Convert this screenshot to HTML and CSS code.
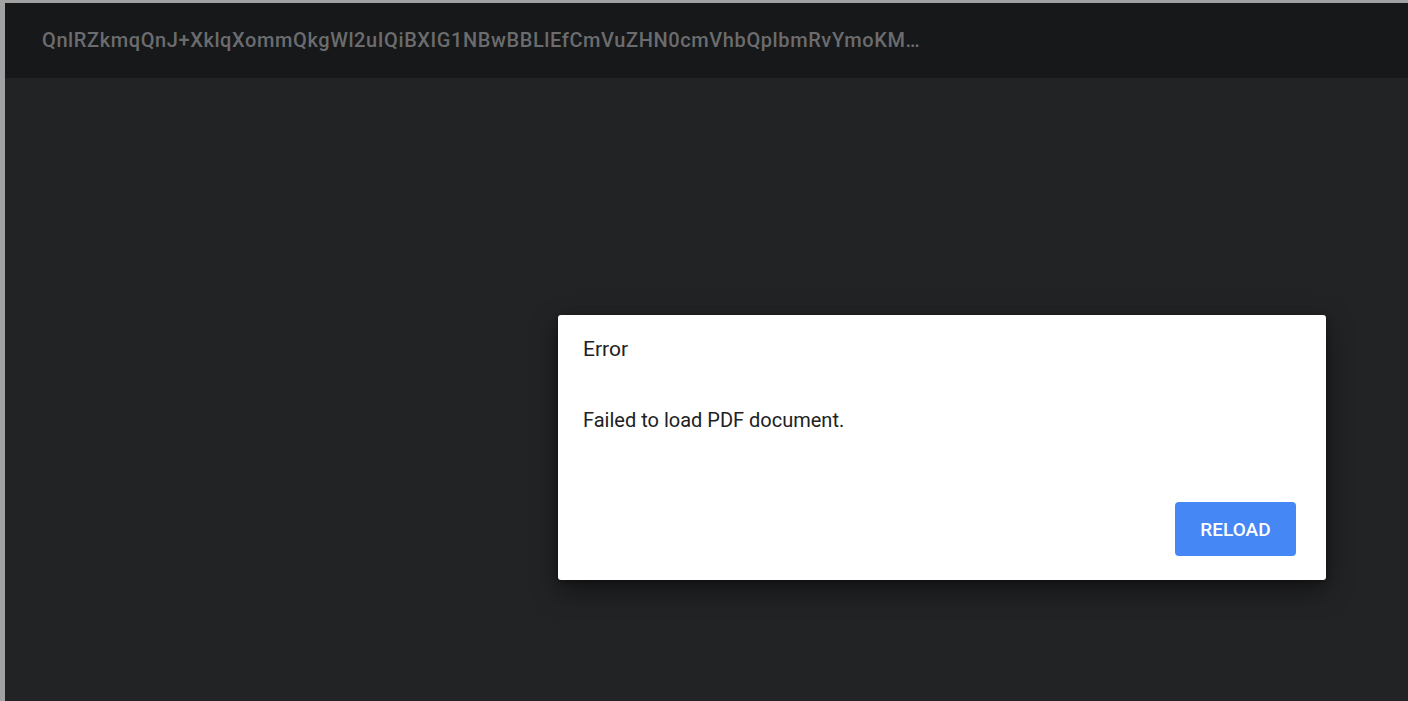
FILE: index.html
```html
<!DOCTYPE html>
<html>
<head>
<meta charset="utf-8">
<title>PDF</title>
<link rel="stylesheet" href="styles.css">
</head>
<body>
<div class="frame">
  <header class="toolbar">
    <span class="doc-title">QnlRZkmqQnJ+XklqXommQkgWl2uIQiBXIG1NBwBBLlEfCmVuZHN0cmVhbQplbmRvYmoKM…</span>
  </header>
  <main class="viewer">
    <div class="dialog">
      <div class="dialog-title">Error</div>
      <div class="dialog-body">Failed to load PDF document.</div>
      <div class="dialog-footer">
        <button class="reload">RELOAD</button>
      </div>
    </div>
  </main>
</div>
</body>
</html>
```

FILE: styles.css
```css
html, body {
  margin: 0;
  padding: 0;
  height: 100%;
  background: #222325;
  font-family: Roboto, "Liberation Sans", sans-serif;
}
.frame {
  height: 100%;
  box-sizing: border-box;
  border-top: 3px solid #a2a2a2;
  border-left: 5px solid #a2a2a2;
  display: flex;
  flex-direction: column;
  overflow: hidden;
}
.toolbar {
  height: 75px;
  flex: none;
  background: #17181a;
  display: flex;
  align-items: center;
  padding-left: 37px;
  box-sizing: border-box;
}
.doc-title {
  color: #6b6c6e;
  font-size: 20px;
  letter-spacing: 0.6px;
  font-weight: 500;
  white-space: nowrap;
  margin-top: -2px;
}
.viewer {
  flex: 1;
  background: #222325;
  display: flex;
  justify-content: flex-end;
  align-items: flex-start;
  padding-top: 237px;
  padding-right: 82px;
}
.dialog {
  width: 768px;
  height: 265px;
  box-sizing: border-box;
  background: #ffffff;
  border-radius: 3px;
  box-shadow: 0 10px 28px rgba(0, 0, 0, 0.45), 0 2px 6px rgba(0, 0, 0, 0.3);
  display: flex;
  flex-direction: column;
  padding: 22px 30px 24px 25px;
}
.dialog-title {
  font-size: 21px;
  line-height: 24px;
  color: #202124;
}
.dialog-body {
  margin-top: 47px;
  font-size: 20px;
  line-height: 24px;
  color: #202124;
}
.dialog-footer {
  margin-top: auto;
  display: flex;
  justify-content: flex-end;
}
.reload {
  height: 54px;
  width: 121px;
  border: none;
  border-radius: 4px;
  background: #4587f4;
  color: #ffffff;
  font-family: Roboto, "Liberation Sans", sans-serif;
  font-size: 19px;
  font-weight: 500;
  padding: 0;
  cursor: pointer;
}
```
